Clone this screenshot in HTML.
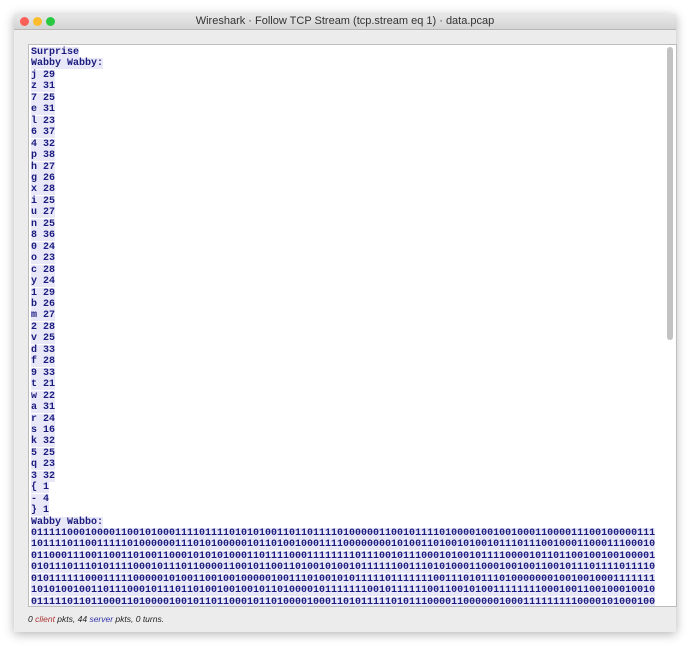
<!DOCTYPE html><html><head><style>
body{margin:0;width:690px;height:646px;background:#fff;position:relative;overflow:hidden;font-family:"Liberation Sans",sans-serif}
.win{position:absolute;left:14px;top:14px;width:662px;height:618px;background:#ececec;box-shadow:0 2px 10px rgba(0,0,0,.3)}
.tb{position:absolute;left:0;top:0;width:662px;height:15px;background:linear-gradient(#e8e8e8,#d4d4d4);border-bottom:1px solid #b8b8b8;text-align:center;font-size:11px;line-height:15px;color:#333}
.dot{position:absolute;top:3px;width:9px;height:9px;border-radius:50%}
.ta{position:absolute;left:14px;top:30px;width:647px;height:561px;background:#fff;border:1px solid #bdbdbd;overflow:hidden}
pre{margin:0;position:absolute;left:2px;top:2px;font-family:"Liberation Mono",monospace;font-size:10px;line-height:11.45px;color:#1c1c80;font-weight:bold}
pre span{background:#e8e8f8}
.sb{position:absolute;right:3px;top:2px;width:6px;height:293px;background:#c2c2c2;border-radius:3px}
.st{position:absolute;left:14px;top:600px;font-size:8.5px;font-style:italic;color:#222}
</style></head><body>
<div class="win">
<div class="tb"><div class="dot" style="left:6px;background:#fc5f57"></div><div class="dot" style="left:19px;background:#fdbc2e"></div><div class="dot" style="left:32px;background:#28c840"></div>Wireshark · Follow TCP Stream (tcp.stream eq 1) · data.pcap</div>
<div class="ta"><pre><span>Surprise</span>
<span>Wabby Wabby:</span>
<span>j 29</span>
<span>z 31</span>
<span>7 25</span>
<span>e 31</span>
<span>l 23</span>
<span>6 37</span>
<span>4 32</span>
<span>p 38</span>
<span>h 27</span>
<span>g 26</span>
<span>x 28</span>
<span>i 25</span>
<span>u 27</span>
<span>n 25</span>
<span>8 36</span>
<span>0 24</span>
<span>o 23</span>
<span>c 28</span>
<span>y 24</span>
<span>1 29</span>
<span>b 26</span>
<span>m 27</span>
<span>2 28</span>
<span>v 25</span>
<span>d 33</span>
<span>f 28</span>
<span>9 33</span>
<span>t 21</span>
<span>w 22</span>
<span>a 31</span>
<span>r 24</span>
<span>s 16</span>
<span>k 32</span>
<span>5 25</span>
<span>q 23</span>
<span>3 32</span>
<span>{ 1</span>
<span>- 4</span>
<span>} 1</span>
<span>Wabby Wabbo:</span>
<span>01111100010000110010100011110111101010100110110111101000001100101111010000100100100011000011100100000111</span>
<span>10111101100111110100000011101010000010110100100011110000000010100110100101001011101110010001100011100010</span>
<span>01100011100110011010011000101010100011011110001111111101110010111000101001011110000101101100100100100001</span>
<span>01011101110101111000101110110000110010110011010010100101111110011101010001100010010011001011101111011110</span>
<span>01011111100011111000001010011001001000001001110100101011111011111110011101011101000000010010010001111111</span>
<span>10101001001101110001011101101001001001011010000101111111001011111100110010100111111110001001100100010010</span>
<span>01111101101100011010000100101101100010110100001000110101111101011100001100000010001111111110000101000100</span></pre><div class="sb"></div></div>
<div class="st">0 <span style="color:#a33">client</span> pkts, 44 <span style="color:#33a">server</span> pkts, 0 turns.</div>
</div>
</body></html>
